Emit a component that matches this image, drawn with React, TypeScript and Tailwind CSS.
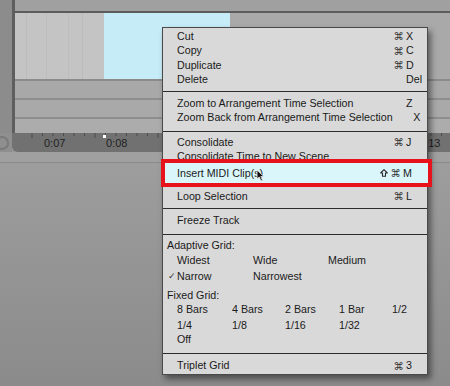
import React from "react";

const font = { fontFamily: '"Liberation Sans", "DejaVu Sans", Arial, sans-serif' };
const sym = { fontFamily: '"DejaVu Sans", sans-serif' };

function Item({
  label,
  mod,
  k,
  h = "h-[14.5px]",
}: {
  label: string;
  mod?: string;
  k?: string;
  h?: string;
}) {
  return (
    <div className={`flex items-center ${h} pl-[14px] text-[10.7px] text-[#1a1a1a] leading-none`}>
      <span className="flex-1 whitespace-nowrap">{label}</span>
      <span className="w-[30px] text-right whitespace-nowrap pr-[2px] text-[10.5px] text-[#333]" style={sym}>
        {mod}
      </span>
      <span className="w-[21px] whitespace-nowrap">{k}</span>
    </div>
  );
}

function Sep() {
  return <div className="h-px bg-[#2c2c2c]" />;
}

function Ticks() {
  const xs = [];
  for (let x = 20; x < 450; x += 10.5) xs.push(x);
  return (
    <svg className="absolute left-0 top-0" width="450" height="8">
      {xs.map((x, i) => (
        <line key={i} x1={x} y1={0} x2={x} y2={i % 6 === 0 ? 5 : 3} stroke="#4d4d4d" strokeWidth="1" />
      ))}
    </svg>
  );
}

export default function App() {
  return (
    <div className="relative w-[450px] h-[386px] overflow-hidden bg-[#969696]" style={font}>
      {/* arrangement */}
      <div className="flex flex-col">
        <div className="flex h-[133px]">
          <div className="w-[12px] bg-[#8c8c8c]" />
          <div className="w-[3px] bg-[#5e5e5e]" />
          <div className="flex-1 flex flex-col">
            <div className="h-[11px] bg-[#a0a0a0]" />
            <div className="h-[2px] bg-[#5c5c5c]" />
            <div className="h-[66px] flex">
              <div className="w-[89px] bg-[#c4c4c4] flex">
                <div className="w-[12px] border-r border-[#bcbcbc]" />
                <div className="w-[20px] border-r border-[#bdbdbd]" />
                <div className="w-[22px] border-r border-[#bdbdbd]" />
                <div className="w-[14px] border-r border-[#bbbbbb]" />
              </div>
              <div className="w-[126px] bg-[#c6ecf8]" />
              <div className="flex-1 bg-[#a9a9a9]" />
            </div>
            <div className="h-[2px] bg-[#8b8b8b]" />
            <div className="h-[17px] bg-[#a8a8a8]" />
            <div className="h-[2px] bg-[#8e8e8e]" />
            <div className="h-[17px] bg-[#a9a9a9]" />
            <div className="h-[2px] bg-[#8e8e8e]" />
            <div className="flex-1 bg-[#acacac]" />
          </div>
        </div>
        <div className="flex h-[19px]">
          <div className="w-[12px] bg-[#8f8f8f] relative">
            <div className="absolute left-[-5px] top-[3px] w-[14px] h-[14px] rounded-full border-2 border-[#7a7a7a]" />
          </div>
          <div className="relative flex-1 bg-[#717171] rounded-bl-[6px] text-[11px] text-[#1f1f1f] leading-none">
            <Ticks />
            <span className="absolute left-[32px] top-[5px]">0:07</span>
            <span className="absolute left-[91px] top-[2px] w-[3px] h-[3px] bg-white" />
            <span className="absolute left-[94px] top-[5px]">0:08</span>
            <span className="absolute left-[407px] top-[5px]">0:13</span>
          </div>
        </div>
        <div className="h-[10px] bg-[#a0a0a0]" />
        <div className="h-px bg-[#8a8a8a]" />
        <div className="h-[223px] bg-gradient-to-b from-[#9d9d9d] to-[#8b8b8b]" />
      </div>

      {/* context menu */}
      <div className="absolute left-[162px] top-[27px] w-[266px] bg-[#d9d9d9] border border-[#4a4a4a] shadow-[3px_4px_6px_rgba(0,0,0,0.45)]">
        <div className="pt-px pb-[4px]">
          <Item label="Cut" mod="⌘" k="X" />
          <Item label="Copy" mod="⌘" k="C" />
          <Item label="Duplicate" mod="⌘" k="D" />
          <Item label="Delete" k="Del" />
        </div>
        <Sep />
        <div className="pt-[4px] pb-[6px]">
          <Item label="Zoom to Arrangement Time Selection" k="Z" />
          <Item label="Zoom Back from Arrangement Time Selection" k="X" />
        </div>
        <Sep />
        <div className="pt-[3px] pb-[5px]">
          <Item label="Consolidate" mod="⌘" k="J" />
          <Item label="Consolidate Time to New Scene" />
          <div className="h-[14.5px]" />
        </div>
        <Sep />
        <div className="pt-[4.5px] pb-[4.5px]">
          <Item label="Loop Selection" mod="⌘" k="L" />
        </div>
        <Sep />
        <div className="pt-[4px] pb-[6px]">
          <Item label="Freeze Track" />
        </div>
        <Sep />
        <div className="pt-[4px] pb-[6px] text-[10.7px] text-[#1a1a1a] leading-none">
          <div className="h-[14px] flex items-center pl-[4px]">Adaptive Grid:</div>
          <div className="mt-px h-[14px] flex items-center pl-[14px]">
            <span className="w-[76px]">Widest</span>
            <span className="w-[75px]">Wide</span>
            <span>Medium</span>
          </div>
          <div className="mt-[2px] h-[14px] flex items-center pl-[5px]">
            <span className="w-[9px] text-[9px] text-[#333]" style={sym}>✓</span>
            <span className="w-[76px]">Narrow</span>
            <span>Narrowest</span>
          </div>
          <div className="mt-[5px] h-[14px] flex items-center pl-[4px]">Fixed Grid:</div>
          <div className="h-[13px] flex items-center pl-[14px]">
            <span className="w-[55px]">8 Bars</span>
            <span className="w-[53px]">4 Bars</span>
            <span className="w-[54px]">2 Bars</span>
            <span className="w-[53px]">1 Bar</span>
            <span>1/2</span>
          </div>
          <div className="mt-[3px] h-[14px] flex items-center pl-[14px]">
            <span className="w-[55px]">1/4</span>
            <span className="w-[53px]">1/8</span>
            <span className="w-[54px]">1/16</span>
            <span>1/32</span>
          </div>
          <div className="h-[14px] flex items-center pl-[14px]">Off</div>
        </div>
        <Sep />
        <div className="pt-[5px] pb-px">
          <Item label="Triplet Grid" mod="⌘" k="3" />
        </div>
      </div>

      {/* red highlight annotation */}
      <div className="absolute left-[161px] top-[159px] w-[271px] h-[28px] border-[4px] border-[#e8121c] bg-[#daf6fb]">
        <div className="flex items-center h-full pl-[12px] pr-[14px] text-[10.7px] text-[#1a1a1a] leading-none">
          <span className="flex-1">Insert MIDI Clip(s)</span>
          <svg width="8" height="8" viewBox="0 0 8 8" className="mr-[3px]">
            <path d="M4 0.7 L7.3 4 L5.5 4 L5.5 7.3 L2.5 7.3 L2.5 4 L0.7 4 Z" fill="none" stroke="#2a2a2a" strokeWidth="1.1" strokeLinejoin="round" />
          </svg>
          <span className="text-[10.5px] pr-[2px] text-[#333]" style={sym}>⌘</span>
          <span className="w-[11px]">M</span>
        </div>
      </div>

      {/* mouse cursor */}
      <svg className="absolute left-[256px] top-[169px]" width="9" height="13" viewBox="0 0 9 13">
        <path d="M1 1 L1 10 L3.2 8 L5 12 L6.5 11.3 L4.8 7.5 L7.8 7.5 Z" fill="#111" stroke="#eee" strokeWidth="0.8" />
      </svg>
    </div>
  );
}
